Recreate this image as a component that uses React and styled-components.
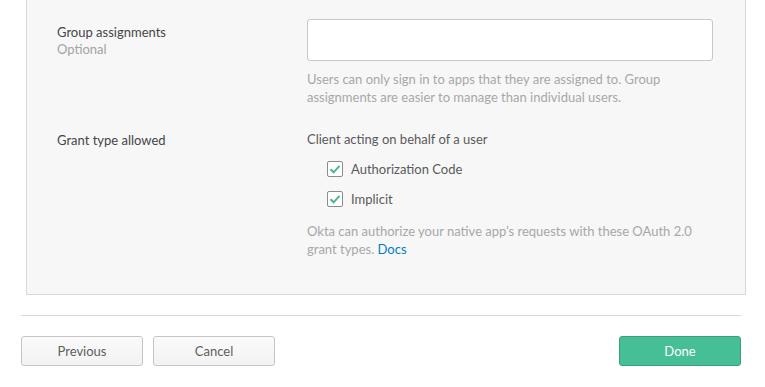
import React from "react";
import styled, { createGlobalStyle } from "styled-components";

const Global = createGlobalStyle`
  body {
    margin: 0;
    background: #fff;
    font-family: Lato, "Open Sans", Arial, sans-serif;
    font-size: 13px;
    color: #4a4a4a;
  }
`;

const Page = styled.div`
  width: 720px;
  padding-left: 21px;
`;

const Panel = styled.div`
  margin: 0 -5px 0 5px;
  background: #f7f7f7;
  border: 1px solid #d8d8d8;
  border-top: none;
  padding: 19px 30px 36px 30px;
`;

const Row = styled.div`
  display: grid;
  grid-template-columns: 250px 406px;
  margin-bottom: ${(p) => p.$gap || 0}px;
`;

const Label = styled.div`
  padding-top: ${(p) => p.$offset}px;
  line-height: 17px;
  color: #454545;
`;

const Sub = styled.div`
  color: #a3a3a3;
`;

const Field = styled.div`
  display: flex;
  flex-direction: column;
`;

const Input = styled.input`
  box-sizing: border-box;
  height: 42px;
  width: 100%;
  border: 1px solid #c8c8c8;
  border-radius: 3px;
  background: #fff;
  outline: none;
`;

const Help = styled.p`
  margin: ${(p) => p.$top}px 0 0;
  line-height: 18px;
  color: #a7a7a7;
`;

const Text = styled.div`
  line-height: 18px;
  color: #5a5a5a;
`;

const Options = styled.div`
  margin-top: 6px;
  padding-left: 20px;
`;

const Option = styled.label`
  display: flex;
  align-items: center;
  gap: 8px;
  height: 30px;
  color: #5a5a5a;
`;

const Box = styled.span`
  box-sizing: border-box;
  width: 16px;
  height: 16px;
  border: 1px solid #8c8c8c;
  border-radius: 2px;
  background: #fff;
  display: flex;
  align-items: center;
  justify-content: center;
`;

const Link = styled.a`
  color: #007dc1;
  text-decoration: none;
`;

const Rule = styled.hr`
  margin: 20px 0 0;
  border: none;
  border-top: 1px solid #d8d8d8;
`;

const Actions = styled.div`
  display: flex;
  gap: 10px;
  margin-top: 20px;
`;

const Button = styled.button`
  box-sizing: border-box;
  width: 122px;
  height: 30px;
  border-radius: 3px;
  font-family: inherit;
  font-size: 13px;
  cursor: pointer;
  border: 1px solid ${(p) => (p.$primary ? "#3a9f7e" : "#c6c6c6")};
  background: ${(p) =>
    p.$primary ? "#46bf97" : "linear-gradient(#fbfbfb, #f2f2f2)"};
  color: ${(p) => (p.$primary ? "#fff" : "#5e5e5e")};
  margin-left: ${(p) => (p.$push ? "auto" : "0")};
`;

const Check = ({ label }) => (
  <Option>
    <Box>
      <svg width="14" height="14" viewBox="0 0 14 14">
        <path d="M2.5 7.2 L5.6 10.3 L11.5 3.8" fill="none" stroke="#4cb58f" strokeWidth="2" />
      </svg>
    </Box>
    {label}
  </Option>
);

export default function App() {
  return (
    <Page>
      <Global />
      <Panel>
        <Row $gap={24}>
          <Label $offset={5}>
            Group assignments
            <Sub>Optional</Sub>
          </Label>
          <Field>
            <Input type="text" />
            <Help $top={9}>
              Users can only sign in to apps that they are assigned to. Group
              assignments are easier to manage than individual users.
            </Help>
          </Field>
        </Row>
        <Row>
          <Label $offset={2}>Grant type allowed</Label>
          <Field>
            <Text>Client acting on behalf of a user</Text>
            <Options>
              <Check label="Authorization Code" />
              <Check label="Implicit" />
            </Options>
            <Help $top={8}>
              Okta can authorize your native app’s requests with these OAuth 2.0
              grant types. <Link href="#">Docs</Link>
            </Help>
          </Field>
        </Row>
      </Panel>
      <Rule />
      <Actions>
        <Button>Previous</Button>
        <Button>Cancel</Button>
        <Button $primary $push>Done</Button>
      </Actions>
    </Page>
  );
}
